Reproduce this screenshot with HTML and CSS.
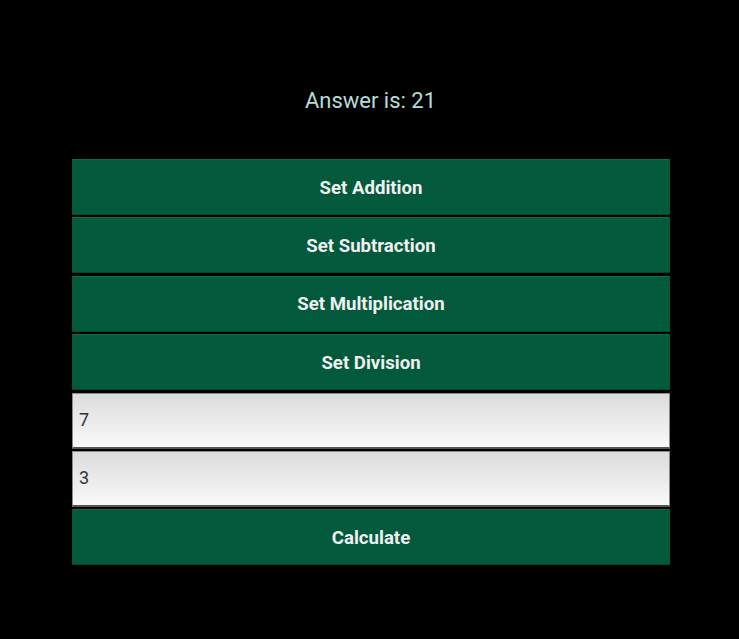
FILE: index.html
```html
<!DOCTYPE html>
<html>
<head>
<meta charset="utf-8">
<link rel="stylesheet" href="styles.css">
</head>
<body>
<div class="screen">
  <div class="answer">Answer is: 21</div>
  <div class="stack">
    <button class="btn">Set Addition</button>
    <button class="btn">Set Subtraction</button>
    <button class="btn">Set Multiplication</button>
    <button class="btn">Set Division</button>
    <div class="field">7</div>
    <div class="field">3</div>
    <button class="btn">Calculate</button>
  </div>
</div>
</body>
</html>
```
FILE: styles.css
```css
html, body {
  margin: 0;
  padding: 0;
  background: #000;
}
.screen {
  width: 739px;
  height: 639px;
  background: #000;
  font-family: Roboto, "Noto Sans", sans-serif;
  padding-top: 86px;
  box-sizing: border-box;
}
.answer {
  text-align: center;
  color: #b4dcdc;
  font-size: 22px;
  line-height: 30px;
  margin-left: 2px;
}
.stack {
  margin: 43px 0 0 72px;
  width: 598px;
  display: flex;
  flex-direction: column;
  gap: 2.4px;
}
.btn {
  height: 56px;
  border: none;
  border-top: 1px solid #0d6e4b;
  border-bottom: 1px solid #024630;
  border-radius: 1px;
  background: #02593b;
  color: #f0f0f0;
  font-family: Roboto, "Noto Sans", sans-serif;
  font-weight: bold;
  font-size: 18.6px;
  padding: 1px 0 0 0;
  margin: 0;
  box-sizing: border-box;
}
.field {
  height: 56px;
  box-sizing: border-box;
  border: 1px solid #8a8a8a;
  border-bottom: 2px solid #555;
  background: linear-gradient(#dcdcdc, #f9f9f9);
  color: #333;
  font-size: 18px;
  display: flex;
  align-items: center;
  padding-left: 6px;
  padding-bottom: 2px;
}
```
